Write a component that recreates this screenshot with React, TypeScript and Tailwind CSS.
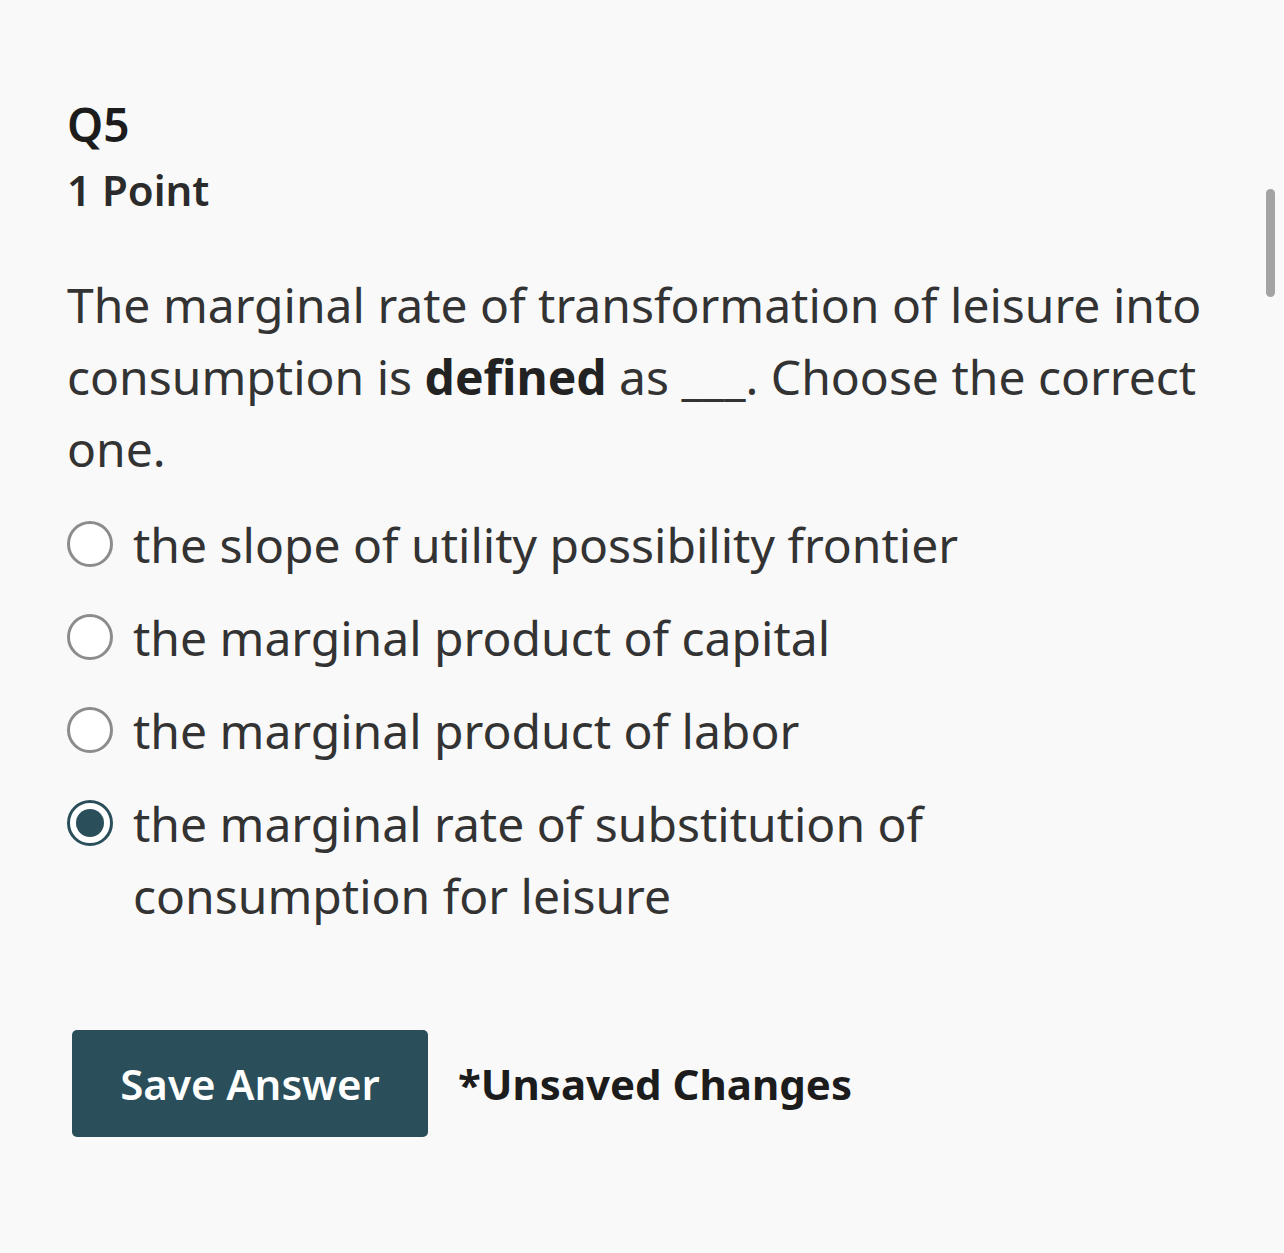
import React from "react";

const options = [
  "the slope of utility possibility frontier",
  "the marginal product of capital",
  "the marginal product of labor",
  "the marginal rate of substitution of consumption for leisure",
];

function Radio({ checked }: { checked: boolean }) {
  return checked ? (
    <span className="mt-[12px] flex h-[46px] w-[46px] shrink-0 items-center justify-center rounded-full border-[3px] border-[#2a4f5a] bg-white">
      <span className="h-[28px] w-[28px] rounded-full bg-[#2a4f5a]" />
    </span>
  ) : (
    <span className="mt-[12px] h-[46px] w-[46px] shrink-0 rounded-full border-[3px] border-[#8c8c8c] bg-white" />
  );
}

export default function App() {
  return (
    <div
      className="relative min-h-[1253px] w-full bg-[#f9f9f9] text-[#333333]"
      style={{ fontFamily: '"Noto Sans", "Open Sans", sans-serif' }}
    >
      <div className="absolute right-[9px] top-[189px] h-[108px] w-[9px] rounded-full bg-[#a3a3a3]" />
      <div className="pl-[67px] pr-[70px] pt-[96px]">
        <div className="text-[46px] font-semibold leading-[56px] text-[#1c1c1c]">Q5</div>
        <div className="text-[42px] font-semibold leading-[76px] text-[#2b2b2b]">1 Point</div>
        <p className="mt-[41px] text-[48px] leading-[72px]">
          The marginal rate of transformation of leisure into consumption is{" "}
          <b className="font-bold text-[#222]">defined</b> as ___. Choose the correct one.
        </p>
        <div className="mt-[24px] flex flex-col gap-[21px]">
          {options.map((o, i) => (
            <label key={i} className="flex items-start gap-[20px]">
              <Radio checked={i === 3} />
              <span className="max-w-[860px] text-[48px] leading-[72px]">{o}</span>
            </label>
          ))}
        </div>
        <div className="mt-[98px] flex items-center gap-[30px]">
          <button className="ml-[5px] h-[107px] w-[356px] rounded-[5px] bg-[#2a4f5a] text-[42px] font-semibold text-white">
            Save Answer
          </button>
          <span className="text-[42px] font-bold text-[#1c1c1c]">*Unsaved Changes</span>
        </div>
      </div>
    </div>
  );
}
